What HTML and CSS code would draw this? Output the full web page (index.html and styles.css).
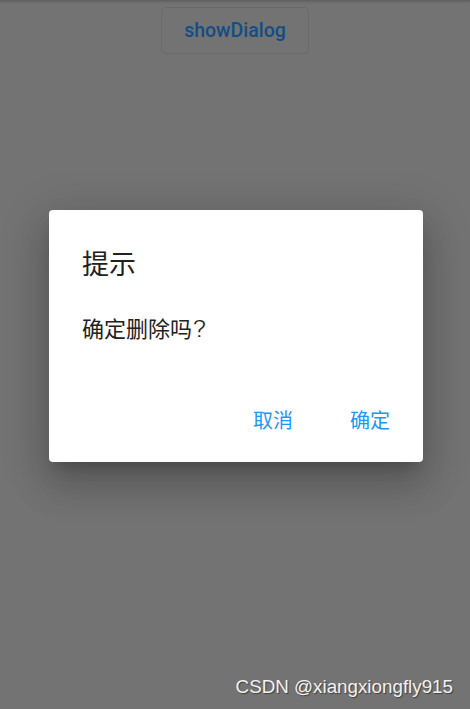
FILE: index.html
```html
<!DOCTYPE html>
<html lang="zh">
<head>
<meta charset="utf-8">
<link rel="stylesheet" href="styles.css">
</head>
<body>
<div class="screen">
  <div class="topbar">
    <button class="show-btn">showDialog</button>
  </div>
  <div class="overlay">
    <div class="dialog">
      <div class="dialog-title">提示</div>
      <div class="dialog-content">确定删除吗<span class="qmark">?</span></div>
      <div class="dialog-actions">
        <span class="action">取消</span>
        <span class="action">确定</span>
      </div>
    </div>
  </div>
  <div class="watermark">CSDN @xiangxiongfly915</div>
</div>
</body>
</html>
```
FILE: styles.css
```css
html, body {
  margin: 0;
  padding: 0;
}
body {
  width: 470px;
  height: 709px;
  overflow: hidden;
  background: #737373;
  font-family: Roboto, "Noto Sans CJK SC", sans-serif;
}
.screen {
  position: relative;
  width: 470px;
  height: 709px;
  background: linear-gradient(to bottom, #5e5e5e 0px, #707070 3px, #737373 5px);
}
.topbar {
  display: flex;
  justify-content: center;
  padding-top: 7px;
}
.show-btn {
  width: 148px;
  height: 47px;
  border: 1px solid #6a6a6a;
  border-radius: 4px;
  background: transparent;
  color: #124d85;
  font-family: Roboto, sans-serif;
  font-weight: 500;
  font-size: 19.5px;
  padding: 0;
}
.overlay {
  display: flex;
  justify-content: center;
  padding-top: 156px;
}
.dialog {
  width: 374px;
  height: 252px;
  margin-left: 2px;
  background: #fff;
  border-radius: 4px;
  box-shadow: 0 11px 15px -7px rgba(0,0,0,0.2), 0 24px 38px 3px rgba(0,0,0,0.14), 0 9px 46px 8px rgba(0,0,0,0.12);
  box-sizing: border-box;
  padding: 34px 33px 0 33px;
  display: flex;
  flex-direction: column;
}
.dialog-title {
  font-family: "Noto Sans CJK SC", sans-serif;
  font-size: 27px;
  line-height: 38px;
  color: #212121;
}
.dialog-content {
  font-family: "Noto Sans CJK SC", sans-serif;
  font-size: 22px;
  line-height: 30px;
  color: #212121;
  margin-top: 30px;
}
.qmark {
  display: inline-block;
  font-family: Roboto, sans-serif;
  font-weight: 300;
  font-size: 24px;
  margin-left: 1px;
  transform: scaleX(1.2);
  transform-origin: left center;
}
.dialog-actions {
  display: flex;
  justify-content: flex-end;
  gap: 57px;
  margin-top: 62px;
  padding-right: 0;
}
.action {
  font-family: "Noto Sans CJK SC", sans-serif;
  font-size: 20px;
  line-height: 28px;
  color: #2196f3;
}
.watermark {
  position: absolute;
  right: 17px;
  top: 676px;
  font-family: "Liberation Sans", Arial, sans-serif;
  font-size: 18.8px;
  color: #f2f2f2;
  text-shadow: 1px 1px 1px rgba(0,0,0,0.45);
}
```
